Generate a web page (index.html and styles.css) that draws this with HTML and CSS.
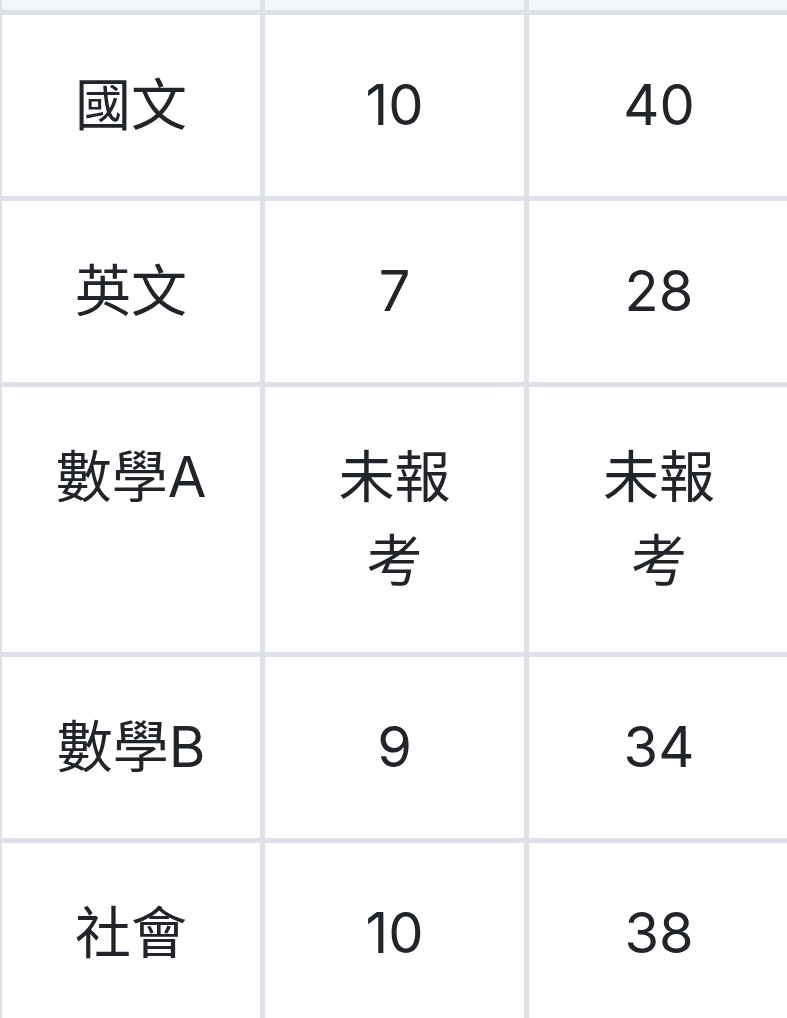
FILE: index.html
```html
<!DOCTYPE html>
<html lang="zh-Hant">
<head>
<meta charset="utf-8">
<title>成績</title>
<link rel="stylesheet" href="styles.css">
</head>
<body>
<table class="score-table">
  <colgroup>
    <col class="col-subject">
    <col class="col-level">
    <col class="col-rank">
  </colgroup>
  <thead>
    <tr class="head-row"><th></th><th></th><th></th></tr>
  </thead>
  <tbody>
    <tr><td>國文</td><td>10</td><td>40</td></tr>
    <tr><td>英文</td><td>7</td><td>28</td></tr>
    <tr><td>數學A</td><td>未報考</td><td>未報考</td></tr>
    <tr><td>數學B</td><td>9</td><td>34</td></tr>
    <tr><td>社會</td><td>10</td><td>38</td></tr>
  </tbody>
</table>
</body>
</html>
```
FILE: styles.css
```css
html, body {
  margin: 0;
  padding: 0;
  background: #ffffff;
  overflow: hidden;
}
.score-table {
  border-collapse: separate;
  border-spacing: 0;
  table-layout: fixed;
  width: 797px;
  margin-left: -3px;
  font-family: Inter, "Noto Sans CJK TC", sans-serif;
  font-size: 56px;
  line-height: 84px;
  color: #212529;
}
.col-subject { width: 268px; }
.col-level { width: 264px; }
.col-rank { width: 265px; }
.score-table th,
.score-table td {
  border-right: 5px solid #dee2e8;
  border-bottom: 5px solid #dee2e8;
  text-align: center;
  vertical-align: top;
}
.score-table th:first-child,
.score-table td:first-child {
  border-left: 5px solid #dee2e8;
}
.head-row th {
  height: 10px;
  padding: 0;
  background: #f1f6fb;
  font-size: 0;
  line-height: 0;
}
.score-table td {
  padding: 48px 48px 49px;
  font-weight: 400;
}
```
